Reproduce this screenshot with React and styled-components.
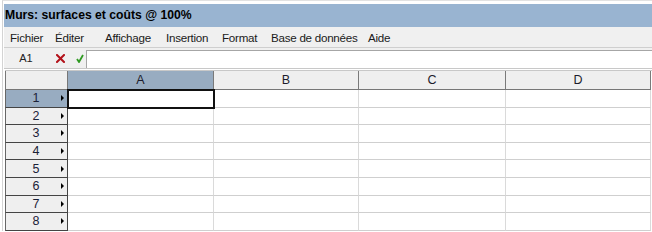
import React from 'react';
import styled, { createGlobalStyle } from 'styled-components';

const Global = createGlobalStyle`
    html, body {
        margin: 0;
        padding: 0;
        background: #ffffff;
    }
    body {
        font-family: "Liberation Sans", Arial, sans-serif;
        color: #1a1a1a;
    }
`;

const Window = styled.div`
    width: 650px;
    margin-left: 2px;
    padding: 3px 0 0 1px;
    border-top: 1px solid #e2e2e2;
    border-left: 1px solid #d4d4d4;
    background: #ffffff;
`;

const TitleBar = styled.div`
    height: 23px;
    line-height: 23px;
    padding-left: 1px;
    background: #99b4d1;
    font-size: 12.2px;
    font-weight: bold;
    color: #000;
    white-space: nowrap;
`;

const MenuBar = styled.div`
    display: flex;
    align-items: center;
    height: 20px;
    padding-left: 6px;
    background: #f0f0f0;
    border-bottom: 1px solid #cfcfcf;
`;

const MenuItem = styled.span`
    width: ${props => props.$w ? `${props.$w}px` : 'auto'};
    font-size: 11.6px;
    letter-spacing: -0.25px;
    color: #1a1a1a;
    white-space: nowrap;
`;

const FormulaBar = styled.div`
    display: flex;
    align-items: center;
    height: 20px;
    background: #f0f0f0;
    border-bottom: 1px solid #c8c8c8;
`;

const CellRef = styled.div`
    width: 44px;
    text-align: center;
    font-size: 11px;
    color: #222;
`;

const IconBtn = styled.span`
    display: flex;
    align-items: center;
    justify-content: center;
    width: ${props => props.$w}px;
    height: 18px;
`;

const Input = styled.div`
    flex: 1;
    align-self: flex-end;
    height: 18px;
    background: #fff;
    border-top: 1px solid #a6a6a6;
    border-left: 1px solid #a6a6a6;
    box-sizing: border-box;
`;

const Sheet = styled.div`
    margin-left: 1px;
    margin-top: 1px;
    border-top: 1px solid #c8c8c8;
    display: grid;
    grid-template-columns: 63px 146px 145px 147px 145px;
`;

const Corner = styled.div`
    height: 19px;
    box-sizing: border-box;
    background: #efefef;
    border-left: 1px solid #777;
    border-right: 1px solid #777;
    border-bottom: 1px solid #777;
`;

const ColHead = styled.div`
    height: 19px;
    box-sizing: border-box;
    display: flex;
    align-items: center;
    justify-content: center;
    background: ${props => props.$active ? '#98acc1' : '#efefef'};
    border-right: 1px solid #7a7a7a;
    border-bottom: 1px solid #777;
    font-size: 12.5px;
    color: #1c1c2c;
`;

const RowHead = styled.div`
    position: relative;
    height: 17.6px;
    box-sizing: border-box;
    display: flex;
    align-items: center;
    justify-content: center;
    padding-right: 1px;
    background: ${props => props.$active ? '#98acc1' : '#efefef'};
    border-left: 1px solid #666;
    border-right: 1px solid #444;
    border-bottom: 1px solid #444;
    font-size: 12.5px;
    color: #1c2238;
`;

const Arrow = styled.span`
    position: absolute;
    right: 3px;
    top: 50%;
    margin-top: -3px;
    width: 0;
    height: 0;
    border-left: 3px solid #000;
    border-top: 3px solid transparent;
    border-bottom: 3px solid transparent;
`;

const Cell = styled.div`
    position: relative;
    z-index: ${props => props.$selected ? 1 : 0};
    height: 17.6px;
    box-sizing: border-box;
    background: #fff;
    border-right: 1px solid #dadada;
    border-bottom: 1px solid #cfcfcf;
    outline: ${props => props.$selected ? '2px solid #111' : 'none'};
    outline-offset: -1px;
`;

const menus = [
    { label: 'Fichier', w: 45 },
    { label: 'Éditer', w: 50 },
    { label: 'Affichage', w: 61 },
    { label: 'Insertion', w: 56 },
    { label: 'Format', w: 49 },
    { label: 'Base de données', w: 97 },
    { label: 'Aide' },
];

const cols = ['A', 'B', 'C', 'D'];
const rows = [1, 2, 3, 4, 5, 6, 7, 8];

const CrossIcon = () => (
    <svg width="9" height="9" viewBox="0 0 9 9">
        <path d="M1 1 L8 8 M8 1 L1 8" stroke="#b3121a" strokeWidth="2" strokeLinecap="square" fill="none" />
    </svg>
);

const CheckIcon = () => (
    <svg width="8" height="9" viewBox="0 0 8 9">
        <path d="M1 5 L3 8 L7 1" stroke="#2f9a22" strokeWidth="1.8" fill="none" />
    </svg>
);

const App = () => {
    return (
        <>
            <Global />
            <Window>
                <TitleBar>Murs: surfaces et coûts @ 100%</TitleBar>
                <MenuBar>
                    {menus.map(m => <MenuItem key={m.label} $w={m.w}>{m.label}</MenuItem>)}
                </MenuBar>
                <FormulaBar>
                    <CellRef>A1</CellRef>
                    <IconBtn $w={25}><CrossIcon /></IconBtn>
                    <IconBtn $w={13}><CheckIcon /></IconBtn>
                    <Input />
                </FormulaBar>
                <Sheet>
                    <Corner />
                    {cols.map(c => <ColHead key={c} $active={c === 'A'}>{c}</ColHead>)}
                    {rows.map(r => (
                        <React.Fragment key={r}>
                            <RowHead $active={r === 1}>{r}<Arrow /></RowHead>
                            {cols.map(c => <Cell key={c} $selected={r === 1 && c === 'A'} />)}
                        </React.Fragment>
                    ))}
                </Sheet>
            </Window>
        </>
    );
}

export default App
